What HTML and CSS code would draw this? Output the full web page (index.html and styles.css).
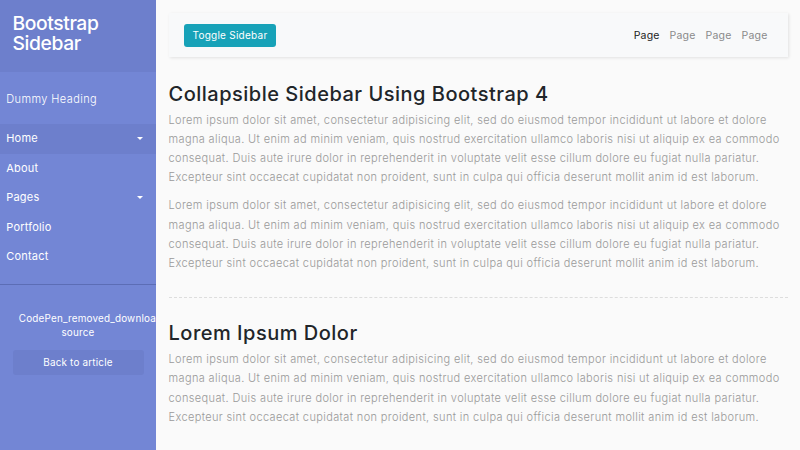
FILE: index.html
```html
<!DOCTYPE html>
<html lang="en">
<head>
<meta charset="utf-8">
<title>Collapsible Sidebar Using Bootstrap 4</title>
<link rel="stylesheet" href="styles.css">
</head>
<body>
<div class="wrapper">
  <nav class="sidebar">
    <div class="sidebar-header">
      <h3>Bootstrap Sidebar</h3>
    </div>
    <ul class="components">
      <p class="dummy">Dummy Heading</p>
      <li class="active"><a href="#">Home<span class="caret"></span></a></li>
      <li><a href="#">About</a></li>
      <li><a href="#">Pages<span class="caret"></span></a></li>
      <li><a href="#">Portfolio</a></li>
      <li><a href="#">Contact</a></li>
    </ul>
    <ul class="ctas">
      <li><a href="#" class="download">CodePen_removed_download source</a></li>
      <li><a href="#" class="article">Back to article</a></li>
    </ul>
  </nav>
  <main class="content">
    <div class="navbar">
      <button class="toggle">Toggle Sidebar</button>
      <ul class="nav-links">
        <li><a href="#" class="active">Page</a></li>
        <li><a href="#">Page</a></li>
        <li><a href="#">Page</a></li>
        <li><a href="#">Page</a></li>
      </ul>
    </div>
    <h2>Collapsible Sidebar Using Bootstrap 4</h2>
    <p>Lorem ipsum dolor sit amet, consectetur adipisicing elit, sed do eiusmod tempor incididunt ut labore et dolore<br>magna aliqua. Ut enim ad minim veniam, quis nostrud exercitation ullamco laboris nisi ut aliquip ex ea commodo<br>consequat. Duis aute irure dolor in reprehenderit in voluptate velit esse cillum dolore eu fugiat nulla pariatur.<br>Excepteur sint occaecat cupidatat non proident, sunt in culpa qui officia deserunt mollit anim id est laborum.</p>
    <p>Lorem ipsum dolor sit amet, consectetur adipisicing elit, sed do eiusmod tempor incididunt ut labore et dolore<br>magna aliqua. Ut enim ad minim veniam, quis nostrud exercitation ullamco laboris nisi ut aliquip ex ea commodo<br>consequat. Duis aute irure dolor in reprehenderit in voluptate velit esse cillum dolore eu fugiat nulla pariatur.<br>Excepteur sint occaecat cupidatat non proident, sunt in culpa qui officia deserunt mollit anim id est laborum.</p>
    <div class="line"></div>
    <h2>Lorem Ipsum Dolor</h2>
    <p>Lorem ipsum dolor sit amet, consectetur adipisicing elit, sed do eiusmod tempor incididunt ut labore et dolore<br>magna aliqua. Ut enim ad minim veniam, quis nostrud exercitation ullamco laboris nisi ut aliquip ex ea commodo<br>consequat. Duis aute irure dolor in reprehenderit in voluptate velit esse cillum dolore eu fugiat nulla pariatur.<br>Excepteur sint occaecat cupidatat non proident, sunt in culpa qui officia deserunt mollit anim id est laborum.</p>
    <div class="line"></div>
  </main>
</div>
</body>
</html>
```
FILE: styles.css
```css
* { box-sizing: border-box; }
html, body { margin: 0; padding: 0; }
body {
  font-family: "Inter", "Open Sans", sans-serif;
  background: #fafafa;
  overflow: hidden;
}
a { text-decoration: none; color: inherit; }
ul { list-style: none; margin: 0; }

.wrapper {
  display: flex;
  height: 450px;
  align-items: stretch;
}

.sidebar {
  width: 156px;
  flex-shrink: 0;
  background: #7386d5;
  color: #fff;
  overflow: hidden;
}
.sidebar-header {
  background: #6d7fcc;
  padding: 12.75px 12.5px 0;
  height: 72px;
}
.sidebar-header h3 {
  margin: 0;
  font-size: 19.3px;
  line-height: 20.5px;
  font-weight: 500;
  letter-spacing: -0.4px;
}
.components {
  padding: 12.5px 0;
  border-bottom: 1px solid #5c6db5;
}
.dummy {
  margin: 0 0 10px;
  padding: 6.25px;
  font-size: 11px;
  line-height: 17px;
  font-weight: 300;
  color: #fff;
  letter-spacing: 0.4px;
}
.components a {
  display: flex;
  align-items: center;
  justify-content: space-between;
  padding: 6.25px 13px 6.25px 6.25px;
  font-size: 11px;
  line-height: 17px;
  letter-spacing: 0.2px;
}
.components li.active a { background: #6d7fcc; }
.caret {
  width: 0;
  height: 0;
  border-left: 3px solid transparent;
  border-right: 3px solid transparent;
  border-top: 3px solid #fff;
}
.ctas {
  padding: 20px 12.5px;
}
.ctas a {
  display: block;
  text-align: center;
  font-size: 9.9px;
  line-height: 14px;
  padding: 6.25px;
  border-radius: 3px;
  margin-bottom: 4px;
  letter-spacing: 0.2px;
}
.ctas a.article { background: #6d7fcc; line-height: 12.5px; }

.content {
  flex: 1;
  padding: 12.5px;
  min-width: 0;
}
.navbar {
  display: flex;
  align-items: center;
  justify-content: space-between;
  background: #f8f9fa;
  padding: 11px 15px 10px;
  box-shadow: 1px 1px 3px rgba(0,0,0,0.1);
  margin-bottom: 25px;
}
.toggle {
  font-family: inherit;
  background: #17a2b8;
  color: #fff;
  border: none;
  border-radius: 3px;
  font-size: 10px;
  letter-spacing: 0.25px;
  height: 23px;
  padding: 0 9px;
}
.nav-links {
  display: flex;
  padding: 0;
}
.nav-links a {
  display: block;
  padding: 0 5px;
  font-size: 10.5px;
  letter-spacing: 0.2px;
  color: #8a8a8a;
}
.nav-links a.active { color: #222; }

h2 {
  margin: 0 0 5px;
  font-size: 20px;
  line-height: 24px;
  font-weight: 500;
  letter-spacing: 0.5px;
  color: #212529;
}
p {
  margin: 0 0 9px;
  font-size: 11px;
  line-height: 19.2px;
  font-weight: 300;
  letter-spacing: 0.37px;
  color: #999;
  white-space: nowrap;
}
.line {
  border-bottom: 1px dashed #ddd;
  margin: 23.5px 0;
}
```
